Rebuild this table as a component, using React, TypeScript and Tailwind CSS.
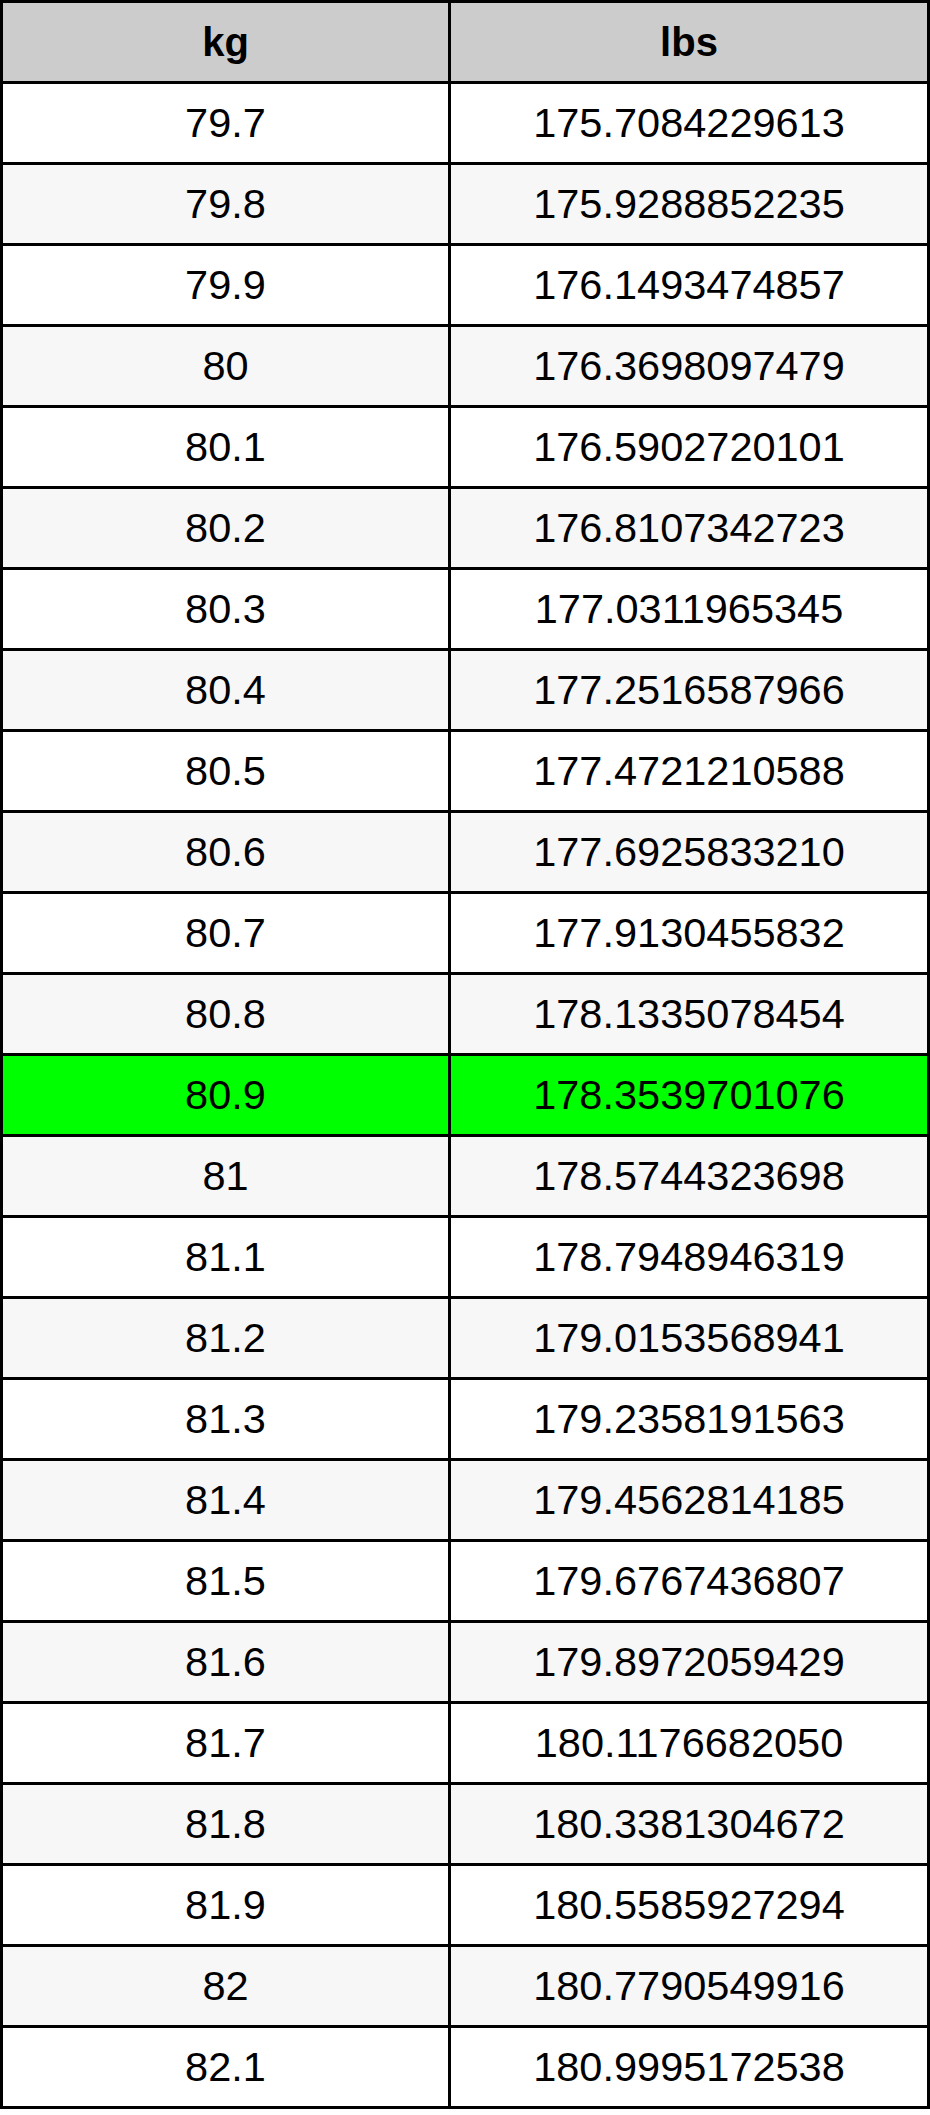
import React from "react";

const rows: [string, string][] = [
  ["79.7", "175.7084229613"],
  ["79.8", "175.9288852235"],
  ["79.9", "176.1493474857"],
  ["80", "176.3698097479"],
  ["80.1", "176.5902720101"],
  ["80.2", "176.8107342723"],
  ["80.3", "177.0311965345"],
  ["80.4", "177.2516587966"],
  ["80.5", "177.4721210588"],
  ["80.6", "177.6925833210"],
  ["80.7", "177.9130455832"],
  ["80.8", "178.1335078454"],
  ["80.9", "178.3539701076"],
  ["81", "178.5744323698"],
  ["81.1", "178.7948946319"],
  ["81.2", "179.0153568941"],
  ["81.3", "179.2358191563"],
  ["81.4", "179.4562814185"],
  ["81.5", "179.6767436807"],
  ["81.6", "179.8972059429"],
  ["81.7", "180.1176682050"],
  ["81.8", "180.3381304672"],
  ["81.9", "180.5585927294"],
  ["82", "180.7790549916"],
  ["82.1", "180.9995172538"],
];

export default function App() {
  return (
    <div className="w-[930px] bg-white pb-[6px] font-['Liberation_Sans',Arial,sans-serif] text-black">
      <div className="border-l-[3px] border-t-[3px] border-black">
        <div className="grid grid-cols-[448px_479px] bg-[#cccccc]">
          <div className="flex h-[81px] items-center justify-center border-b-[3px] border-r-[3px] border-black text-[40px] font-bold">
            kg
          </div>
          <div className="flex h-[81px] items-center justify-center border-b-[3px] border-r-[3px] border-black text-[40px] font-bold">
            lbs
          </div>
        </div>
        {rows.map(([kg, lbs], i) => {
          const bg =
            i === 12 ? "bg-[#00ff00]" : i % 2 === 1 ? "bg-[#f7f7f7]" : "bg-white";
          return (
            <div key={kg} className={`grid grid-cols-[448px_479px] ${bg}`}>
              <div className="flex h-[81px] items-center justify-center border-b-[3px] border-r-[3px] border-black text-[41.5px]">
                {kg}
              </div>
              <div className="flex h-[81px] items-center justify-center border-b-[3px] border-r-[3px] border-black text-[41.5px]">
                {lbs}
              </div>
            </div>
          );
        })}
      </div>
    </div>
  );
}
